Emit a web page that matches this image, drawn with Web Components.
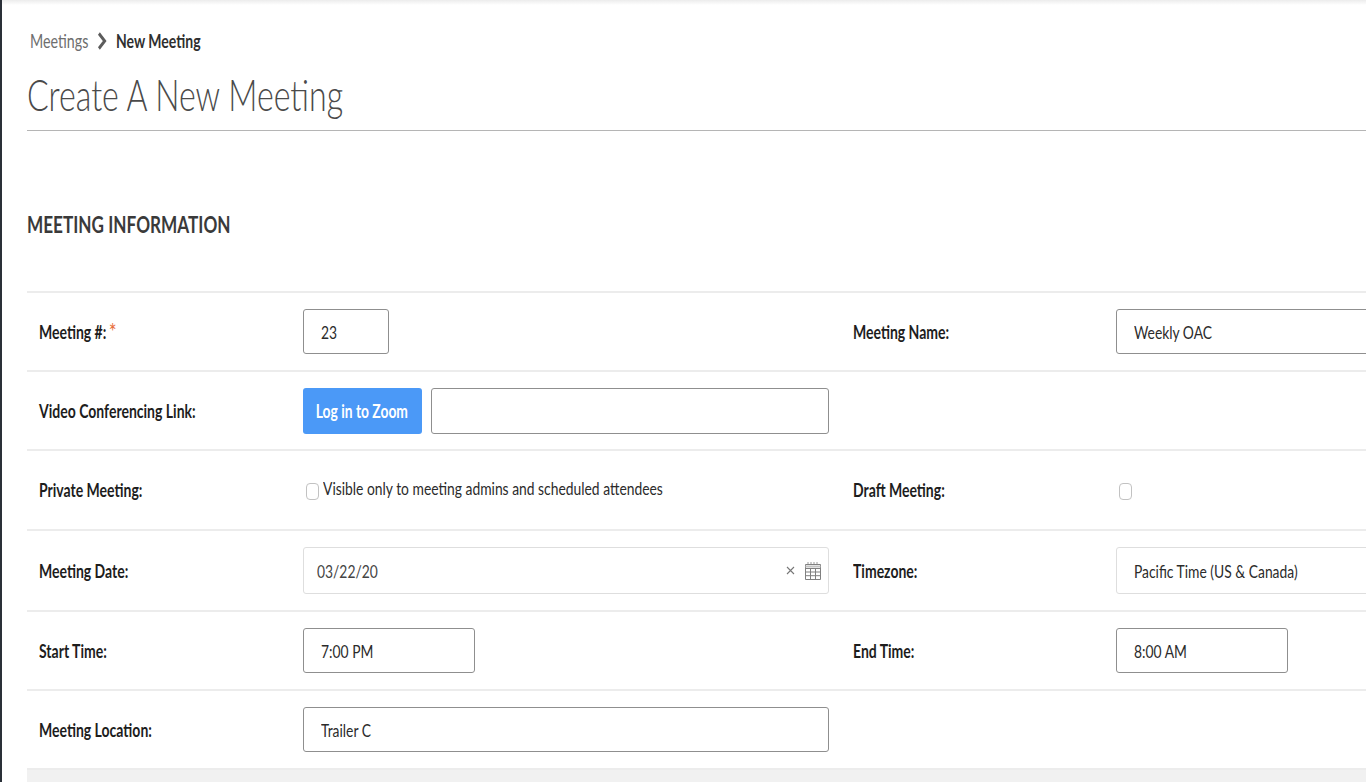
<!DOCTYPE html>
<html lang="en">
<head>
<meta charset="utf-8">
<title>Create A New Meeting</title>
<style>
  html, body { margin: 0; height: 782px; overflow: hidden; background: #fff; }
  body { font-family: Lato, "Liberation Sans", sans-serif; color: #1b1b1b; }
</style>
</head>
<body>
<meeting-page>
  <page-header current="New Meeting" parent="Meetings" title="Create A New Meeting"></page-header>
  <section-title>MEETING INFORMATION</section-title>
  <form-row label="Meeting #:" required label2="Meeting Name:">
    <text-field slot="a" value="23" width="86"></text-field>
    <text-field slot="b" value="Weekly OAC" width="526"></text-field>
  </form-row>
  <form-row label="Video Conferencing Link:">
    <zoom-button slot="a">Log in to Zoom</zoom-button>
    <text-field slot="a" width="398" height="46"></text-field>
  </form-row>
  <form-row label="Private Meeting:" label2="Draft Meeting:" height="80">
    <check-box slot="a">Visible only to meeting admins and scheduled attendees</check-box>
    <check-box slot="b"></check-box>
  </form-row>
  <form-row label="Meeting Date:" label2="Timezone:" height="81">
    <date-field slot="a" value="03/22/20"></date-field>
    <text-field slot="b" value="Pacific Time (US &amp; Canada)" width="526" height="47" soft></text-field>
  </form-row>
  <form-row label="Start Time:" label2="End Time:">
    <text-field slot="a" value="7:00 PM" width="172"></text-field>
    <text-field slot="b" value="8:00 AM" width="172"></text-field>
  </form-row>
  <form-row label="Meeting Location:">
    <text-field slot="a" value="Trailer C" width="526"></text-field>
  </form-row>
</meeting-page>
<script>
const shadow = (el, html) => { el.attachShadow({ mode: "open" }).innerHTML = html; };

// the source capture is squeezed horizontally, every text run gets this
const squeeze = "display: inline-block; white-space: nowrap; transform: scaleX(.77); transform-origin: 0 50%;";

customElements.define("meeting-page", class extends HTMLElement {
  constructor() {
    super();
    shadow(this, `
      <style>
        :host { display: block; position: relative; height: 782px; overflow: hidden; box-sizing: border-box;
                padding-left: 25px; border-left: 2px solid #2a3038; }
        .shade { position: absolute; left: 0; right: 0; top: 0; height: 5px;
                 background: linear-gradient(#ececec, #fff); }
        .foot { height: 14px; background: #f1f1f1; }
      </style>
      <div class="shade"></div>
      <slot></slot>
      <div class="foot"></div>`);
  }
});

customElements.define("page-header", class extends HTMLElement {
  connectedCallback() {
    shadow(this, `
      <style>
        :host { display: block; height: 131px; box-sizing: border-box; border-bottom: 1px solid #b5b5b5; padding-top: 29px; }
        .crumbs { ${squeeze} display: flex; width: max-content; align-items: center; height: 24px; margin-left: 3px;
                  font-size: 18.500px; color: #6e6e6e; }
        .crumbs svg { margin: 0 12px 0 11px; }
        .crumbs b { color: #2f2f2f; font-weight: 700; font-size: 18.200px; }
        h1 { ${squeeze} display: block; width: max-content; margin: 11px 0 0; font-weight: 300; font-size: 43px; line-height: 62px;
             color: #4a4a4a; transform: scaleX(.747); }
      </style>
      <div class="crumbs"><span>${this.getAttribute("parent")}</span><svg width="13" height="18" viewBox="0 0 13 18"><path d="M2.500 1.500 10 9l-7.500 7.500" fill="none" stroke="#5c5c5c" stroke-width="3.400"/></svg><b>${this.getAttribute("current")}</b></div>
      <h1>${this.getAttribute("title")}</h1>`);
  }
});

customElements.define("section-title", class extends HTMLElement {
  constructor() {
    super();
    shadow(this, `
      <style>
        :host { display: block; height: 162px; box-sizing: border-box; padding-top: 79px; border-bottom: 2px solid #ececec; }
        span { font-size: 22.300px; font-weight: 700; line-height: 30px; color: #3a3a3a; ${squeeze} }
      </style><span><slot></slot></span>`);
  }
});

customElements.define("form-row", class extends HTMLElement {
  connectedCallback() {
    const second = this.getAttribute("label2");
    shadow(this, `
      <style>
        :host { display: grid; grid-template-columns: 276px 538px 275px 600px; align-items: center;
                height: ${this.getAttribute("height") || 79}px; box-sizing: border-box; border-bottom: 2px solid #ececec; }
        .label { padding-left: 12px; }
        .label span { font-size: 18.200px; font-weight: 700; color: #1d1d1d; ${squeeze} }
        .req { color: #e8703e; font-weight: 400; font-style: normal; font-size: 24px; line-height: 0; margin-left: 3px; position: relative; top: 1px; }
        .ctl { display: flex; align-items: center; gap: 9px; }
      </style>
      <div class="label"><span>${this.getAttribute("label")}${this.hasAttribute("required") ? '<em class="req">*</em>' : ""}</span></div>
      <div class="ctl"><slot name="a"></slot></div>
      <div class="label"><span>${second || ""}</span></div>
      <div class="ctl"><slot name="b"></slot></div>`);
  }
});

customElements.define("text-field", class extends HTMLElement {
  connectedCallback() {
    const soft = this.hasAttribute("soft");
    const height = this.getAttribute("height") || 45;
    shadow(this, `
      <style>
        :host { display: block; flex: none; box-sizing: border-box; height: ${height}px; width: ${this.getAttribute("width")}px;
                border: 1px solid ${soft ? "#dedede" : "#8f8f8f"}; border-radius: 3px; padding-left: 17px; }
        span { font-size: 18px; line-height: ${height}px; color: #2b2b2b; ${squeeze} }
      </style><span>${this.getAttribute("value") || ""}</span>`);
  }
});

customElements.define("date-field", class extends HTMLElement {
  connectedCallback() {
    shadow(this, `
      <style>
        :host { display: flex; align-items: center; flex: none; box-sizing: border-box; width: 526px; height: 47px;
                border: 1px solid #dedede; border-radius: 3px; padding: 0 7px 0 13px; }
        span { flex: 1; font-size: 18px; color: #444; ${squeeze} }
        svg { display: block; }
        .x { margin-right: 10px; }
      </style>
      <span>${this.getAttribute("value")}</span>
      <svg class="x" width="9" height="9" viewBox="0 0 9 9"><path d="M1 1l7 7M8 1 1 8" stroke="#777" stroke-width="1.100"/></svg>
      <svg width="16" height="19" viewBox="0 0 16 19" fill="none" stroke="#808080">
        <path d="M.5 3.500h15v15H.5zM.5 7.500h15M.5 11h15M.5 14.700h15M5.500 7.500v11M10.500 7.500v11"/>
        <path d="M3 1v3M6 1v3M9 1v3M12 1v3" stroke-width=".8"/>
        <path d="M.5 5.500h15" stroke-width="2" stroke="#c4c4c4"/>
      </svg>`);
  }
});

customElements.define("check-box", class extends HTMLElement {
  constructor() {
    super();
    shadow(this, `
      <style>
        :host { display: flex; align-items: center; flex: none; }
        i { display: block; flex: none; box-sizing: border-box; width: 13px; height: 17px; margin: 3px 4px 0 3px;
            border: 1px solid #c2c2c2; border-radius: 4px; background: #fff; }
        span { position: relative; top: -2px; font-size: 18px; color: #2b2b2b; ${squeeze} }
      </style><i></i><span><slot></slot></span>`);
  }
});

customElements.define("zoom-button", class extends HTMLElement {
  constructor() {
    super();
    shadow(this, `
      <style>
        :host { display: flex; justify-content: center; flex: none; box-sizing: border-box; width: 119px; height: 46px;
                border-radius: 3px; background: #4b99f7; }
        span { color: #fff; font-size: 18px; font-weight: 700; line-height: 46px; ${squeeze} transform-origin: 50% 50%; position: relative; left: -1px; }
      </style><span><slot></slot></span>`);
  }
});
</script>
</body>
</html>
